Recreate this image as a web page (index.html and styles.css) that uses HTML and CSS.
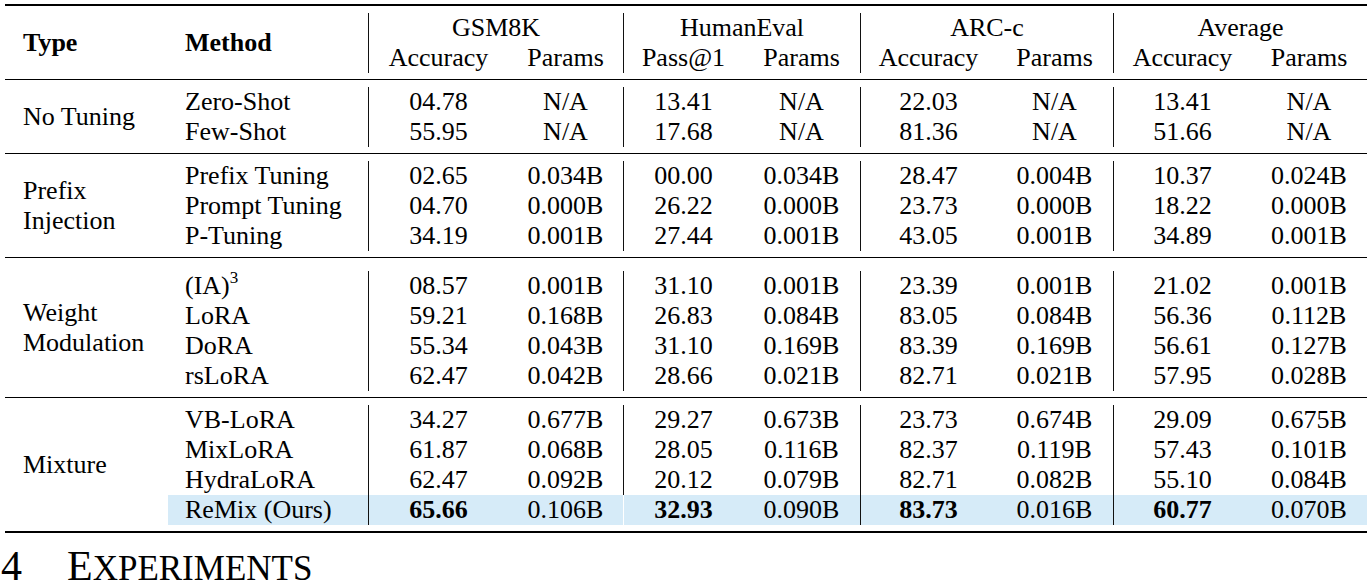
FILE: index.html
```html
<!DOCTYPE html>
<html>
<head>
<meta charset="utf-8">
<link rel="stylesheet" href="styles.css">
</head>
<body>
<div class="tbl">
  <div class="sec head">
    <div class="type"><b>Type</b></div>
    <div class="hgrid">
      <div class="hmethod"><b>Method</b></div>
      <div class="gt vl g1">GSM8K</div>
      <div class="gt vl g2">HumanEval</div>
      <div class="gt vl g3">ARC-c</div>
      <div class="gt vl g4">Average</div>
      <div class="sub vl">Accuracy</div><div class="sub">Params</div>
      <div class="sub vl">Pass@1</div><div class="sub">Params</div>
      <div class="sub vl">Accuracy</div><div class="sub">Params</div>
      <div class="sub vl">Accuracy</div><div class="sub">Params</div>
    </div>
  </div>

  <div class="sec">
    <div class="type">No Tuning</div>
    <div class="rows">
      <div class="row"><div class="m">Zero-Shot</div><div class="v vl">04.78</div><div class="v">N/A</div><div class="v vl">13.41</div><div class="v">N/A</div><div class="v vl">22.03</div><div class="v">N/A</div><div class="v vl">13.41</div><div class="v">N/A</div></div>
      <div class="row"><div class="m">Few-Shot</div><div class="v vl">55.95</div><div class="v">N/A</div><div class="v vl">17.68</div><div class="v">N/A</div><div class="v vl">81.36</div><div class="v">N/A</div><div class="v vl">51.66</div><div class="v">N/A</div></div>
    </div>
  </div>

  <div class="sec">
    <div class="type">Prefix<br>Injection</div>
    <div class="rows">
      <div class="row"><div class="m">Prefix Tuning</div><div class="v vl">02.65</div><div class="v">0.034B</div><div class="v vl">00.00</div><div class="v">0.034B</div><div class="v vl">28.47</div><div class="v">0.004B</div><div class="v vl">10.37</div><div class="v">0.024B</div></div>
      <div class="row"><div class="m">Prompt Tuning</div><div class="v vl">04.70</div><div class="v">0.000B</div><div class="v vl">26.22</div><div class="v">0.000B</div><div class="v vl">23.73</div><div class="v">0.000B</div><div class="v vl">18.22</div><div class="v">0.000B</div></div>
      <div class="row"><div class="m">P-Tuning</div><div class="v vl">34.19</div><div class="v">0.001B</div><div class="v vl">27.44</div><div class="v">0.001B</div><div class="v vl">43.05</div><div class="v">0.001B</div><div class="v vl">34.89</div><div class="v">0.001B</div></div>
    </div>
  </div>

  <div class="sec">
    <div class="type">Weight<br>Modulation</div>
    <div class="rows">
      <div class="row tall"><div class="m">(IA)<sup>3</sup></div><div class="v vl">08.57</div><div class="v">0.001B</div><div class="v vl">31.10</div><div class="v">0.001B</div><div class="v vl">23.39</div><div class="v">0.001B</div><div class="v vl">21.02</div><div class="v">0.001B</div></div>
      <div class="row"><div class="m">LoRA</div><div class="v vl">59.21</div><div class="v">0.168B</div><div class="v vl">26.83</div><div class="v">0.084B</div><div class="v vl">83.05</div><div class="v">0.084B</div><div class="v vl">56.36</div><div class="v">0.112B</div></div>
      <div class="row"><div class="m">DoRA</div><div class="v vl">55.34</div><div class="v">0.043B</div><div class="v vl">31.10</div><div class="v">0.169B</div><div class="v vl">83.39</div><div class="v">0.169B</div><div class="v vl">56.61</div><div class="v">0.127B</div></div>
      <div class="row"><div class="m">rsLoRA</div><div class="v vl">62.47</div><div class="v">0.042B</div><div class="v vl">28.66</div><div class="v">0.021B</div><div class="v vl">82.71</div><div class="v">0.021B</div><div class="v vl">57.95</div><div class="v">0.028B</div></div>
    </div>
  </div>

  <div class="sec last">
    <div class="type">Mixture</div>
    <div class="rows">
      <div class="row"><div class="m">VB-LoRA</div><div class="v vl">34.27</div><div class="v">0.677B</div><div class="v vl">29.27</div><div class="v">0.673B</div><div class="v vl">23.73</div><div class="v">0.674B</div><div class="v vl">29.09</div><div class="v">0.675B</div></div>
      <div class="row"><div class="m">MixLoRA</div><div class="v vl">61.87</div><div class="v">0.068B</div><div class="v vl">28.05</div><div class="v">0.116B</div><div class="v vl">82.37</div><div class="v">0.119B</div><div class="v vl">57.43</div><div class="v">0.101B</div></div>
      <div class="row"><div class="m">HydraLoRA</div><div class="v vl">62.47</div><div class="v">0.092B</div><div class="v vl">20.12</div><div class="v">0.079B</div><div class="v vl">82.71</div><div class="v">0.082B</div><div class="v vl">55.10</div><div class="v">0.084B</div></div>
      <div class="row hl"><div class="m">ReMix (Ours)</div><div class="v vl"><b>65.66</b></div><div class="v">0.106B</div><div class="v vl gap"><b>32.93</b></div><div class="v">0.090B</div><div class="v vl"><b>83.73</b></div><div class="v">0.016B</div><div class="v vl"><b>60.77</b></div><div class="v">0.070B</div></div>
    </div>
  </div>
</div>

<h2 class="section"><span class="num">4</span><span class="cap">E</span><span class="sc">XPERIMENTS</span></h2>
</body>
</html>
```

FILE: styles.css
```css
html, body {
  margin: 0;
  padding: 0;
  background: #fff;
}
body {
  padding: 4px 5px 0 5px;
  font-family: "Liberation Serif", "Times New Roman", serif;
  font-size: 26px;
  color: #000;
  overflow: hidden;
  height: 578px;
}
.tbl {
  width: 1362px;
  border-top: 2px solid #000;
  border-bottom: 2px solid #000;
}
.sec {
  display: flex;
  padding: 7px 0 6px;
  border-bottom: 1px solid #000;
}
.sec.last {
  border-bottom: none;
}
.type {
  width: 163px;
  flex: none;
  box-sizing: border-box;
  padding-left: 18px;
  display: flex;
  flex-direction: column;
  justify-content: center;
  line-height: 30px;
}
.hgrid,
.row {
  display: grid;
  grid-template-columns: 200px 140px 115px 120px 117px 136px 117px 138px 116px;
  line-height: 30px;
}
.hgrid {
  grid-template-rows: 30px 30px;
}
.hmethod {
  grid-row: 1 / 3;
  grid-column: 1;
  padding-left: 17px;
  display: flex;
  align-items: center;
}
.gt {
  grid-row: 1;
  text-align: center;
}
.g1 { grid-column: 2 / 4; }
.g2 { grid-column: 4 / 6; }
.g3 { grid-column: 6 / 8; }
.g4 { grid-column: 8 / 10; }
.sub {
  grid-row: 2;
  text-align: center;
}
.vl {
  border-left: 1px solid #111;
}
.rows {
  display: flex;
  flex-direction: column;
}
.row {
  height: 30px;
}
.row.tall {
  height: 36px;
  align-items: end;
}
.m {
  padding-left: 17px;
  white-space: nowrap;
}
.v {
  text-align: center;
  white-space: nowrap;
}
sup {
  font-size: 17px;
  line-height: 0;
  vertical-align: 11px;
}
.row.hl .m,
.row.hl .v {
  background: #d6ebf8;
}
.row.hl .gap {
  border-left-color: #fff;
}
.section {
  margin: 12px 0 0 -4px;
  font-size: 42px;
  font-weight: normal;
  line-height: 42px;
  white-space: nowrap;
}
.num {
  display: inline-block;
  width: 66px;
}
.sc {
  font-size: 35px;
}
```
